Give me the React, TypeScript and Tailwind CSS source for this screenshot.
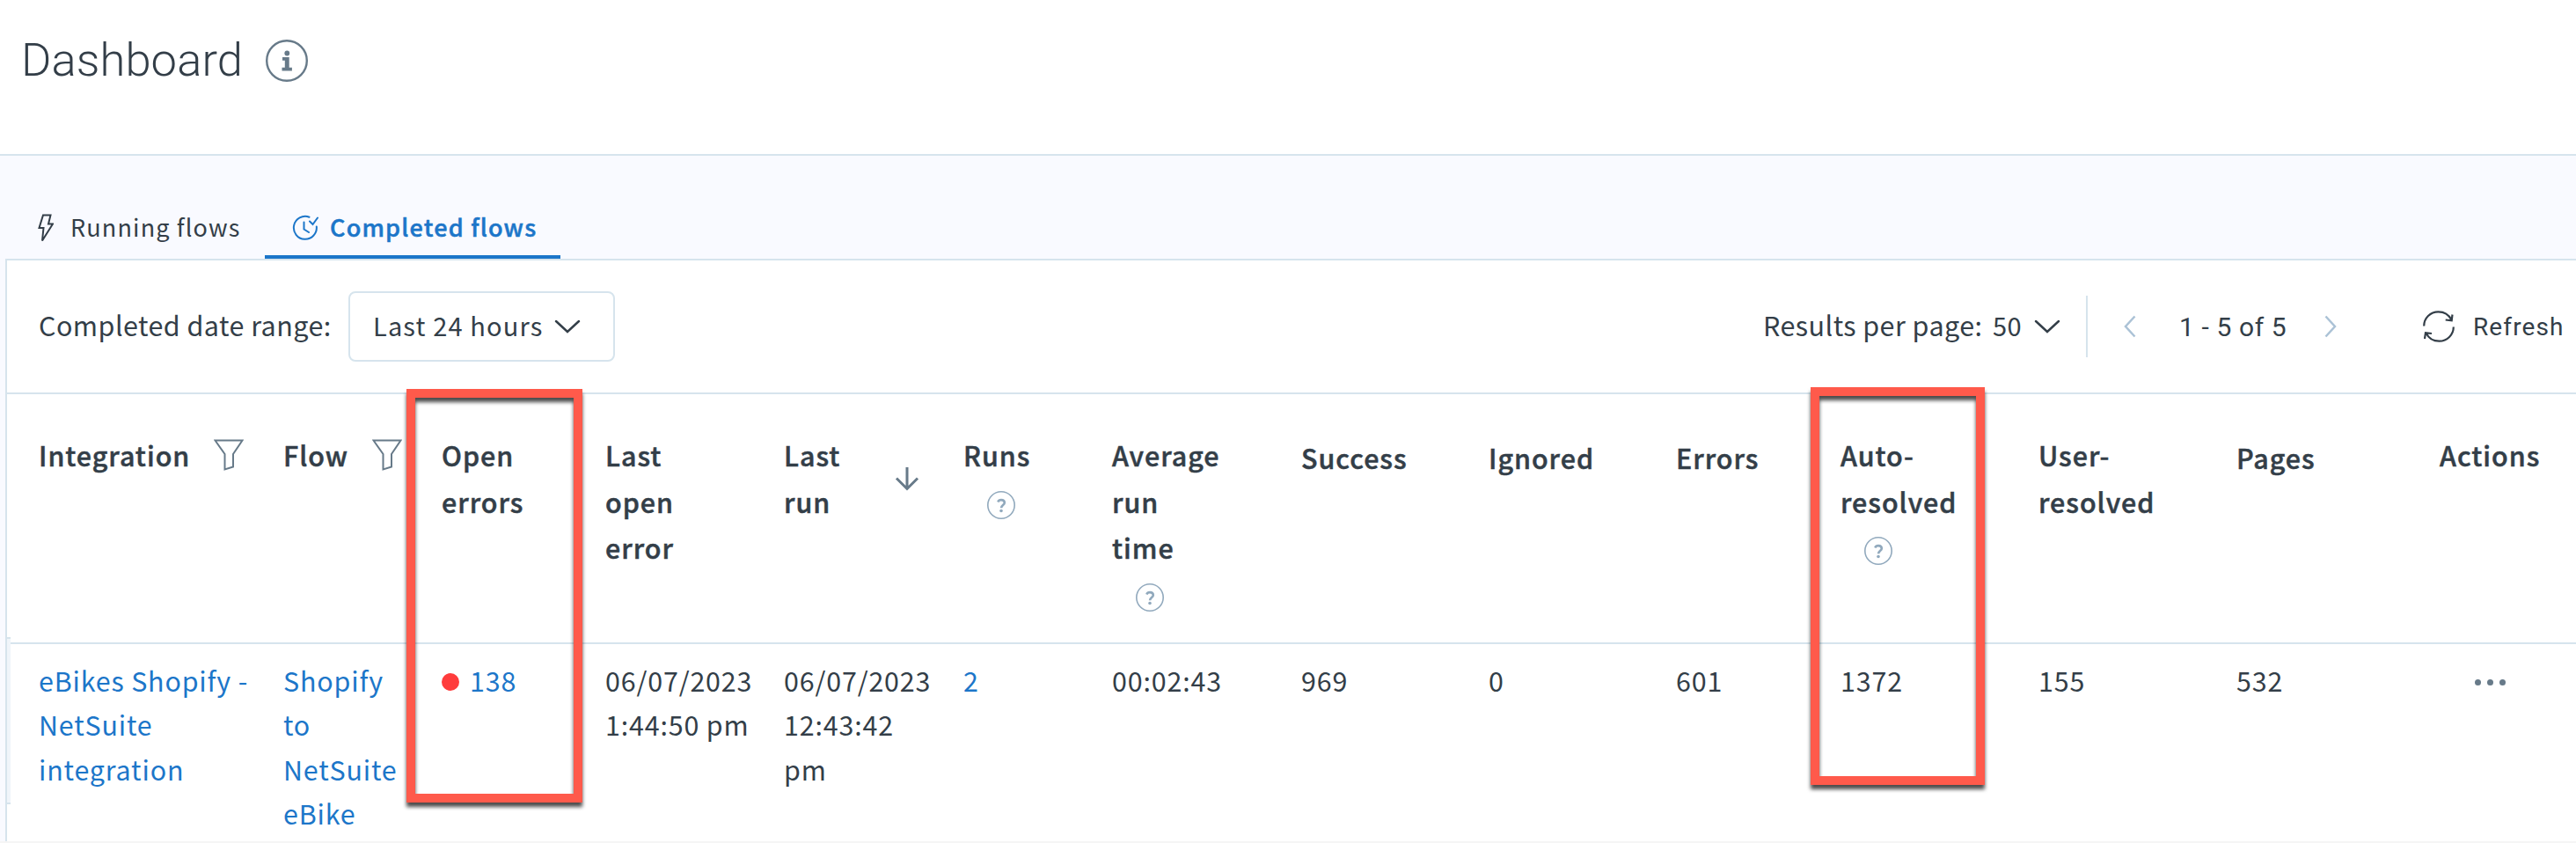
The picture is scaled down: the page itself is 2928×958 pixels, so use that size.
import React from 'react';

const columns = [
    { lines: ['Integration'], width: 'w-[278px]', filter: true },
    { lines: ['Flow'], width: 'w-[180px]', filter: true },
    { lines: ['Open', 'errors'], width: 'w-[186px]' },
    { lines: ['Last', 'open', 'error'], width: 'w-[203px]' },
    { lines: ['Last', 'run'], width: 'w-[204px]', sorted: true },
    { lines: ['Runs'], width: 'w-[169px]', help: true },
    { lines: ['Average', 'run', 'time'], width: 'w-[215px]', help: true },
    { lines: ['Success'], width: 'w-[213px]', low: true },
    { lines: ['Ignored'], width: 'w-[213px]', low: true },
    { lines: ['Errors'], width: 'w-[187px]', low: true },
    { lines: ['Auto-', 'resolved'], width: 'w-[225px]', help: true },
    { lines: ['User-', 'resolved'], width: 'w-[225px]' },
    { lines: ['Pages'], width: 'w-[231px]', low: true },
    { lines: ['Actions'], width: 'w-[155px]' },
];

const cells = [
    { lines: ['eBikes Shopify -', 'NetSuite', 'integration'], link: true },
    { lines: ['Shopify', 'to', 'NetSuite', 'eBike'], link: true },
    { lines: ['138'], link: true, dot: true },
    { lines: ['06/07/2023', '1:44:50 pm'] },
    { lines: ['06/07/2023', '12:43:42', 'pm'] },
    { lines: ['2'], link: true },
    { lines: ['00:02:43'] },
    { lines: ['969'] },
    { lines: ['0'] },
    { lines: ['601'] },
    { lines: ['1372'] },
    { lines: ['155'] },
    { lines: ['532'] },
];

function FilterIcon() {
    return (
        <svg className="w-[34px] h-[36px] shrink-0" viewBox="0 0 34 36" fill="none" stroke="#677a89" strokeWidth="2">
            <path d="M1.500 1.500h31L22 17v14.500l-9.500 3V17z" />
        </svg>
    );
}

function HelpIcon() {
    return (
        <svg className="w-8 h-8 shrink-0" viewBox="0 0 32 32" fill="none" stroke="#91a9bd">
            <circle cx="16" cy="16" r="15.200" strokeWidth="1.600" />
            <path d="M12.300 12.400c.6-1.500 2-2.300 3.700-2.300 2.300 0 3.800 1.300 3.800 3.200 0 2.700-3.700 2.900-3.700 5.900" strokeWidth="2.600" />
            <circle cx="16" cy="22.500" r="1.800" fill="#91a9bd" stroke="none" />
        </svg>
    );
}

function ChevronDown() {
    return (
        <svg className="w-[30px] h-4 shrink-0" viewBox="0 0 30 16" fill="none" stroke="#333e48" strokeWidth="2.500" strokeLinecap="round">
            <path d="M2 2l13 12L28 2" />
        </svg>
    );
}

export default function App() {
    return (
        <div className="relative w-[2928px] h-[958px] overflow-hidden bg-[#f9faff] text-[#333e48] font-['Noto_Sans_CJK_SC',sans-serif]">
            {/* Page header */}
            <header className="flex h-[177px] border-b-2 border-[#d6e4ed] bg-white pl-6">
                <h1 className="w-[278px] pt-[36px] font-[Roboto,sans-serif] text-[52.500px] leading-[64px] font-light tracking-[0.1px]">Dashboard</h1>
                <svg className="mt-[45px] w-12 h-12" viewBox="0 0 48 48" fill="none" stroke="#677a89">
                    <circle cx="24" cy="24" r="22.800" strokeWidth="2.400" />
                    <g fill="#677a89" stroke="none">
                        <circle cx="24.300" cy="15.500" r="2.900" />
                        <path d="M19 20h7.700v11.800h3.200v3.700H18.500v-3.700h3.300v-8.100H19z" />
                    </g>
                </svg>
            </header>

            {/* Tabs */}
            <nav className="flex h-[117px] items-end pl-[24px] text-[27px]">
                <div className="flex h-[70px] w-[277px] items-center pl-[19px] tracking-[1.150px]">
                    <svg className="w-[18px] h-8" viewBox="0 0 18 32" fill="none" stroke="#333e48" strokeWidth="2">
                        <path d="M6 1.500h8.500L12 11.500h5L5 30.500l1.500-14.500H1.500z" />
                    </svg>
                    <span className="-mt-px ml-[19px] whitespace-nowrap">Running flows</span>
                </div>
                <div className="flex h-[70px] w-[336px] items-center border-b-4 border-[#1c76c9] pt-[3px] pl-[31px] font-medium tracking-[1.200px] text-[#1c76c9] [-webkit-text-stroke:0.5px]">
                    <svg className="w-[30px] h-[30px]" viewBox="0 0 30 30" fill="none" stroke="#1c76c9" strokeWidth="2" strokeLinecap="round">
                        <path d="M19.500 2.700A13 13 0 1 0 27.800 13.500" />
                        <path d="M13.500 8.500v8l5.500 3.500" />
                        <path d="M20 7.500l3.500 3.500L29 3.500" />
                    </svg>
                    <span className="ml-[13px] whitespace-nowrap">Completed flows</span>
                </div>
            </nav>

            <main className="ml-[6px] h-[662px] border-t-2 border-l-2 border-[#d6e4ed] bg-white">
                {/* Toolbar */}
                <div className="flex h-[152px] items-center border-b-2 border-[#d6e4ed] pl-9 text-[30.500px] tracking-[0.450px]">
                    <span className="-mt-[2px] w-[352px] whitespace-nowrap">Completed date range:</span>
                    <div className="flex h-20 w-[303px] items-center rounded-lg border-2 border-[#d6e4ed] pl-[26px] text-[29px] tracking-[1.150px]">
                        <span className="-mt-[2px] w-[206px] whitespace-nowrap">Last 24 hours</span>
                        <ChevronDown />
                    </div>
                    <div className="ml-[1305px] flex items-center">
                        <span className="-mt-[2px] w-[261px] whitespace-nowrap">Results per page:</span>
                        <span className="-mt-[2px] w-[47px] text-[29px]">50</span>
                        <ChevronDown />
                    </div>
                    <div className="ml-[29px] h-[70px] w-[2px] shrink-0 bg-[#d6e4ed]" />
                    <svg className="ml-[41px] w-[14px] h-[26px]" viewBox="0 0 14 26" fill="none" stroke="#abc2d6" strokeWidth="2.500">
                        <path d="M12.500 1.500L2 13l10.500 11.500" />
                    </svg>
                    <span className="ml-[49px] w-[165px] whitespace-nowrap font-[Roboto,sans-serif] text-[30px] tracking-[0.600px]">1 - 5 of 5</span>
                    <svg className="w-[14px] h-[26px]" viewBox="0 0 14 26" fill="none" stroke="#abc2d6" strokeWidth="2.500">
                        <path d="M1.500 1.500L12 13 1.500 24.500" />
                    </svg>
                    <svg className="ml-[98px] w-9 h-9" viewBox="0 0 36 36" fill="none" stroke="#333e48" strokeWidth="2.200">
                        <path d="M1.200 17.500C1.200 8.500 8.500 1.300 17.500 1.300c6.500 0 12 3.500 14.800 9M33.500 4.500l-.8 6.800-7-.8" />
                        <path d="M34.800 18.500c0 9-7.300 16.200-16.300 16.200-6.500 0-12-3.500-14.800-9M2 32l1-6.800 7 .8" />
                    </svg>
                    <span className="mt-px ml-[21px] font-[Roboto,sans-serif] text-[28px] tracking-[1.100px]">Refresh</span>
                </div>

                {/* Table header */}
                <div className="flex h-[284px] border-b-2 border-[#d6e4ed] pt-[43px] pl-9 text-[30.400px] leading-[52.500px] font-medium tracking-[1px] [-webkit-text-stroke:0.5px]">
                    {columns.map((col, i) => (
                        <div key={i} className={`${col.width} flex shrink-0 ${col.low ? 'pt-[3px]' : ''}`}>
                            <div>
                                {col.lines.map((line) => (
                                    <div key={line} className="whitespace-nowrap">{line}</div>
                                ))}
                                {col.help && <div className="flex h-[60px] items-center pl-[27px]"><HelpIcon /></div>}
                            </div>
                            {col.filter && <div className="ml-[27px] pt-[8px]"><FilterIcon /></div>}
                            {col.sorted && (
                                <svg className="mt-[40px] ml-[62px] w-[28px] h-[27px]" viewBox="0 0 28 27" fill="none" stroke="#677a89" strokeWidth="3">
                                    <path d="M14 0v24M2 12.500l12 12 12-12" />
                                </svg>
                            )}
                        </div>
                    ))}
                </div>

                {/* Table row */}
                <div className="flex h-[224px] pt-[16px] pl-9 text-[30.400px] leading-[50.300px] tracking-[0.850px]">
                    {cells.map((cell, i) => (
                        <div key={i} className={`${columns[i].width} flex shrink-0 ${cell.link ? 'text-[#1c76c9]' : ''}`}>
                            {cell.dot && <span className="mt-[17px] mr-3 h-5 w-5 rounded-full bg-[#ff3c3c]" />}
                            <div>
                                {cell.lines.map((line) => (
                                    <div key={line} className="whitespace-nowrap">{line}</div>
                                ))}
                            </div>
                        </div>
                    ))}
                    <div className="flex gap-[7px] pt-[24px] pl-[40px]">
                        <span className="h-[7px] w-[7px] rounded-full bg-[#677a89]" />
                        <span className="h-[7px] w-[7px] rounded-full bg-[#677a89]" />
                        <span className="h-[7px] w-[7px] rounded-full bg-[#677a89]" />
                    </div>
                </div>
            </main>

            {/* Frozen-row edge and bottom rule */}
            <div className="absolute top-[724px] left-2 h-[190px] w-1 border-y-2 border-[#d6e4ed] bg-[#f0f5fa]" />
            <div className="absolute top-[956px] left-0 h-[2px] w-full bg-[#f5f5f5]" />

            {/* Highlight boxes */}
            <div className="absolute top-[442px] left-[462px] h-[470px] w-[200px] border-[10px] border-[#ff5a4b] drop-shadow-[0_5px_2px_rgba(0,0,0,0.7)]" />
            <div className="absolute top-[440px] left-[2058px] h-[452px] w-[198px] border-[10px] border-[#ff5a4b] drop-shadow-[0_5px_2px_rgba(0,0,0,0.7)]" />
        </div>
    );
}
